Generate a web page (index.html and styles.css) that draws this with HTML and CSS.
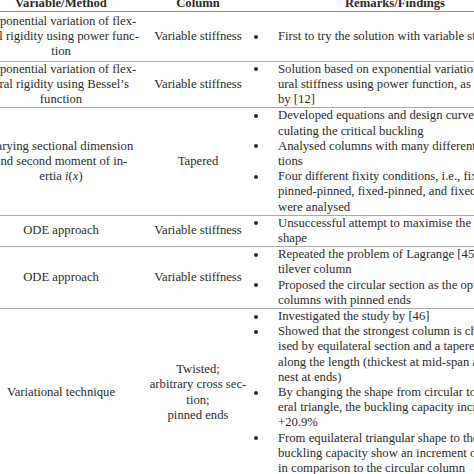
FILE: index.html
```html
<!DOCTYPE html>
<html>
<head>
<meta charset="utf-8">
<link rel="stylesheet" href="styles.css">
</head>
<body>
<table class="tbl">
  <colgroup>
    <col class="c1"><col class="c2"><col class="c3">
  </colgroup>
  <thead>
    <tr>
      <th class="ctr">Variable/Method</th>
      <th class="ctr">Column</th>
      <th class="ctr">Remarks/Findings</th>
    </tr>
  </thead>
  <tbody>
    <tr class="first">
      <td class="ctr">Exponential variation of flex-<br>ural rigidity using power func-<br>tion</td>
      <td class="ctr">Variable stiffness</td>
      <td>
        <div class="item"><span class="dot"></span><span class="txt">First to try the solution with variable stiffness</span></div>
      </td>
    </tr>
    <tr>
      <td class="ctr">Exponential variation of flex-<br>ural rigidity using Bessel’s<br>function</td>
      <td class="ctr">Variable stiffness</td>
      <td>
        <div class="item"><span class="dot"></span><span class="txt">Solution based on exponential variation of flex-<br>ural stiffness using power function, as proposed<br>by [12]</span></div>
      </td>
    </tr>
    <tr>
      <td class="ctr">Varying sectional dimension<br>and second moment of in-<br>ertia <i>i</i>(<i>x</i>)</td>
      <td class="ctr">Tapered</td>
      <td>
        <div class="item"><span class="dot"></span><span class="txt">Developed equations and design curves for cal-<br>culating the critical buckling</span></div>
        <div class="item"><span class="dot"></span><span class="txt">Analysed columns with many different cross sec-<br>tions</span></div>
        <div class="item"><span class="dot"></span><span class="txt">Four different fixity conditions, i.e., fixed-free,<br>pinned-pinned, fixed-pinned, and fixed-fixed<br>were analysed</span></div>
      </td>
    </tr>
    <tr>
      <td class="ctr">ODE approach</td>
      <td class="ctr">Variable stiffness</td>
      <td>
        <div class="item"><span class="dot"></span><span class="txt">Unsuccessful attempt to maximise the column<br>shape</span></div>
      </td>
    </tr>
    <tr>
      <td class="ctr">ODE approach</td>
      <td class="ctr">Variable stiffness</td>
      <td>
        <div class="item"><span class="dot"></span><span class="txt">Repeated the problem of Lagrange [45] for a can-<br>tilever column</span></div>
        <div class="item"><span class="dot"></span><span class="txt">Proposed the circular section as the optimal for<br>columns with pinned ends</span></div>
      </td>
    </tr>
    <tr>
      <td class="ctr">Variational technique</td>
      <td class="ctr">Twisted;<br>arbitrary cross sec-<br>tion;<br>pinned ends</td>
      <td>
        <div class="item"><span class="dot"></span><span class="txt">Investigated the study by [46]</span></div>
        <div class="item"><span class="dot"></span><span class="txt">Showed that the strongest column is character-<br>ised by equilateral section and a tapered form<br>along the length (thickest at mid-span and thin-<br>nest at ends)</span></div>
        <div class="item"><span class="dot"></span><span class="txt">By changing the shape from circular to equilat-<br>eral triangle, the buckling capacity increased by<br>+20.9%</span></div>
        <div class="item"><span class="dot"></span><span class="txt">From equilateral triangular shape to the tapered form, the<br>buckling capacity show an increment of +33.3%<br>in comparison to the circular column</span></div>
      </td>
    </tr>
  </tbody>
</table>
</body>
</html>
```

FILE: styles.css
```css
html, body {
  margin: 0;
  padding: 0;
  background: #ffffff;
  overflow: hidden;
  width: 474px;
  height: 474px;
}

.tbl {
  border-collapse: collapse;
  table-layout: fixed;
  width: 556px;
  margin: -5px 0 0 -20px;
  font-family: "Liberation Serif", "Times New Roman", serif;
  font-size: 12.7px;
  line-height: 15.2px;
  color: #2a2a2a;
}

.c1 { width: 162px; }
.c2 { width: 112px; }
.c3 { width: 282px; }

.tbl th,
.tbl td {
  padding: 0;
  vertical-align: middle;
  border-bottom: 1px solid #a8a8a8;
  white-space: nowrap;
}

.tbl th {
  font-weight: bold;
  padding-top: 1px;
  border-bottom-color: #8c8c8c;
}

.ctr {
  text-align: center;
}

.tbl tr.first td {
  padding-top: 1.5px;
  padding-bottom: 1.5px;
}

.item {
  display: flex;
  align-items: flex-start;
}

.dot {
  flex: none;
  width: 24px;
  height: 15.2px;
  position: relative;
}

.dot::before {
  content: "";
  display: block;
  width: 4px;
  height: 4px;
  border-radius: 50%;
  background: #2a2a2a;
  margin-top: 5.6px;
  margin-left: 0;
}

.txt {
  white-space: nowrap;
}
```
